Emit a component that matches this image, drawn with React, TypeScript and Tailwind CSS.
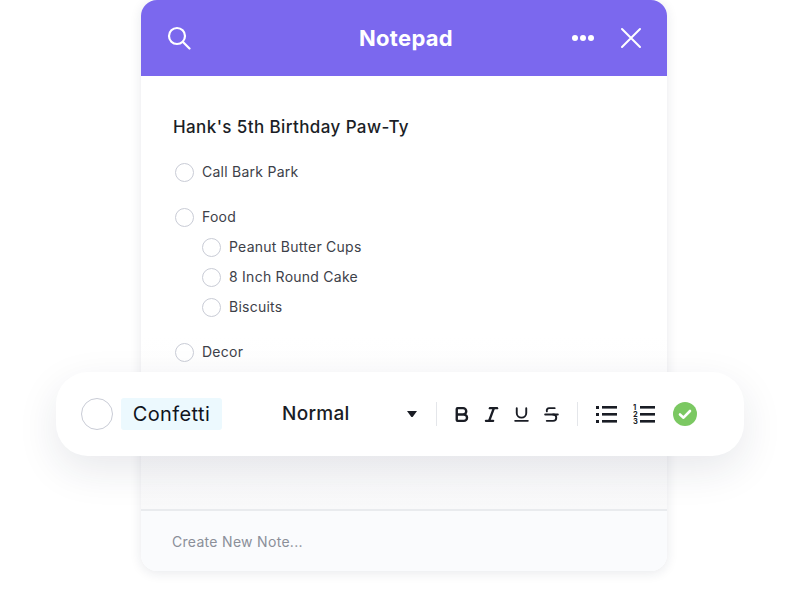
import { Bold, Italic, Strikethrough, Underline } from "lucide-react";

const font = "[font-family:Inter,'Liberation_Sans',sans-serif]";

function Circle({ className = "h-[19px] w-[19px]" }: { className?: string }) {
  return <span className={`${className} shrink-0 rounded-full border border-[#c9ccd6] bg-white`} />;
}

function Item({ label, sub }: { label: string; sub?: boolean }) {
  return (
    <div className={`flex h-[20px] items-center gap-[8px] ${sub ? "pl-[29px]" : "pl-[2px]"}`}>
      <Circle />
      <span className="text-[14px] leading-none tracking-[0.25px] text-[#3d4149]">{label}</span>
    </div>
  );
}

export default function App() {
  return (
    <div className={`${font} relative h-[591px] w-[800px] overflow-hidden bg-white`}>
      {/* Card */}
      <div className="ml-[141px] flex h-[571px] w-[526px] flex-col rounded-[16px] bg-white shadow-[0_2px_12px_rgba(30,40,70,0.1)]">
        <div className="flex h-[76px] shrink-0 items-center justify-between rounded-t-[16px] bg-[#7b68ee] pl-[26px] pr-[25px] text-white">
          <svg width="24" height="24" viewBox="0 0 24 24" fill="none" stroke="currentColor" strokeWidth="2.2" strokeLinecap="round">
            <circle cx="10" cy="10" r="8" />
            <path d="M16 16l6.5 6.5" />
          </svg>
          <span className="pl-[50px] text-[22px] font-bold leading-none tracking-[0.3px]">Notepad</span>
          <div className="flex items-center gap-[25px]">
            <svg width="24" height="8" viewBox="0 0 24 8" fill="currentColor">
              <circle cx="4" cy="4" r="3" />
              <circle cx="12" cy="4" r="3" />
              <circle cx="20" cy="4" r="3" />
            </svg>
            <svg width="22" height="22" viewBox="0 0 22 22" fill="none" stroke="currentColor" strokeWidth="2" strokeLinecap="round">
              <path d="M2 2l18 18M20 2L2 20" />
            </svg>
          </div>
        </div>

        <div className="flex-1 overflow-hidden bg-[linear-gradient(#ffffff_0,#ffffff_60%,#f9f9fa_100%)] pl-[32px] pt-[41px]">
          <h1 className="text-[17px] font-medium leading-[20px] tracking-[0.4px] text-[#1b1e26]">
            Hank's 5th Birthday Paw-Ty
          </h1>
          <div className="mt-[25px]">
            <Item label="Call Bark Park" />
          </div>
          <div className="mt-[25px] flex flex-col gap-[10px]">
            <Item label="Food" />
            <Item label="Peanut Butter Cups" sub />
            <Item label="8 Inch Round Cake" sub />
            <Item label="Biscuits" sub />
          </div>
          <div className="mt-[25px] flex flex-col gap-[10px]">
            <Item label="Decor" />
            <Item label="Balloons" sub />
          </div>
        </div>

        <div className="flex h-[62px] shrink-0 items-center rounded-b-[16px] border-t-2 border-[#e9ebee] bg-[#fafbfd] pl-[31px]">
          <span className="text-[14px] tracking-[0.3px] text-[#8b8f99]">Create New Note...</span>
        </div>
      </div>

      {/* Floating editor toolbar */}
      <div className="absolute left-[56px] top-[372px] flex h-[84px] w-[688px] items-center rounded-[32px] bg-white pl-[25px] shadow-[0_14px_40px_rgba(30,40,70,0.1)]">
        <Circle className="h-[32px] w-[32px]" />
        <span className="ml-[8px] flex h-[32px] w-[101px] items-center justify-center rounded-[3px] bg-[#ecf9fe] text-[20px] tracking-[0.4px] text-[#10141d]">
          Confetti
        </span>
        <span className="ml-[60px] w-[125px] text-[19px] font-medium tracking-[0.3px] text-[#1a1d25]">Normal</span>
        <svg width="10" height="6" viewBox="0 0 10 6" fill="#1a1d25">
          <path d="M0 0h10L6 5.5a1.2 1.2 0 0 1-2 0z" />
        </svg>
        <span className="ml-[19px] h-[24px] w-px bg-[#e4e6ea]" />
        <div className="ml-[15px] flex items-center gap-[11px] text-[#1a1d25]">
          <Bold size={19} strokeWidth={3} />
          <Italic size={19} strokeWidth={3} />
          <Underline size={19} strokeWidth={2.4} />
          <Strikethrough size={19} strokeWidth={2.4} />
        </div>
        <span className="ml-[16px] h-[24px] w-px bg-[#e4e6ea]" />
        <svg className="ml-[18px]" width="22" height="20" viewBox="0 0 22 20" fill="#1a1d25">
          <rect x="0" y="2" width="3" height="3" />
          <rect x="0" y="9" width="3" height="3" />
          <rect x="0" y="16" width="3" height="3" />
          <rect x="6" y="2" width="15" height="2.6" />
          <rect x="6" y="9" width="15" height="2.6" />
          <rect x="6" y="16" width="15" height="2.6" />
        </svg>
        <svg className="ml-[15px]" width="23" height="22" viewBox="0 0 23 22" fill="#1a1d25">
          <text x="0" y="7" fontSize="7.5" fontWeight="700">1</text>
          <text x="0" y="14" fontSize="7.5" fontWeight="700">2</text>
          <text x="0" y="21" fontSize="7.5" fontWeight="700">3</text>
          <rect x="7" y="3" width="15" height="2.6" />
          <rect x="7" y="10" width="15" height="2.6" />
          <rect x="7" y="17" width="15" height="2.6" />
        </svg>
        <svg className="ml-[17px]" width="24" height="24" viewBox="0 0 24 24" fill="none">
          <circle cx="12" cy="12" r="12" fill="#7bc862" />
          <path d="M7 12.5l3.5 3.2L17 9" stroke="#fff" strokeWidth="2.6" strokeLinecap="round" strokeLinejoin="round" />
        </svg>
      </div>
    </div>
  );
}
